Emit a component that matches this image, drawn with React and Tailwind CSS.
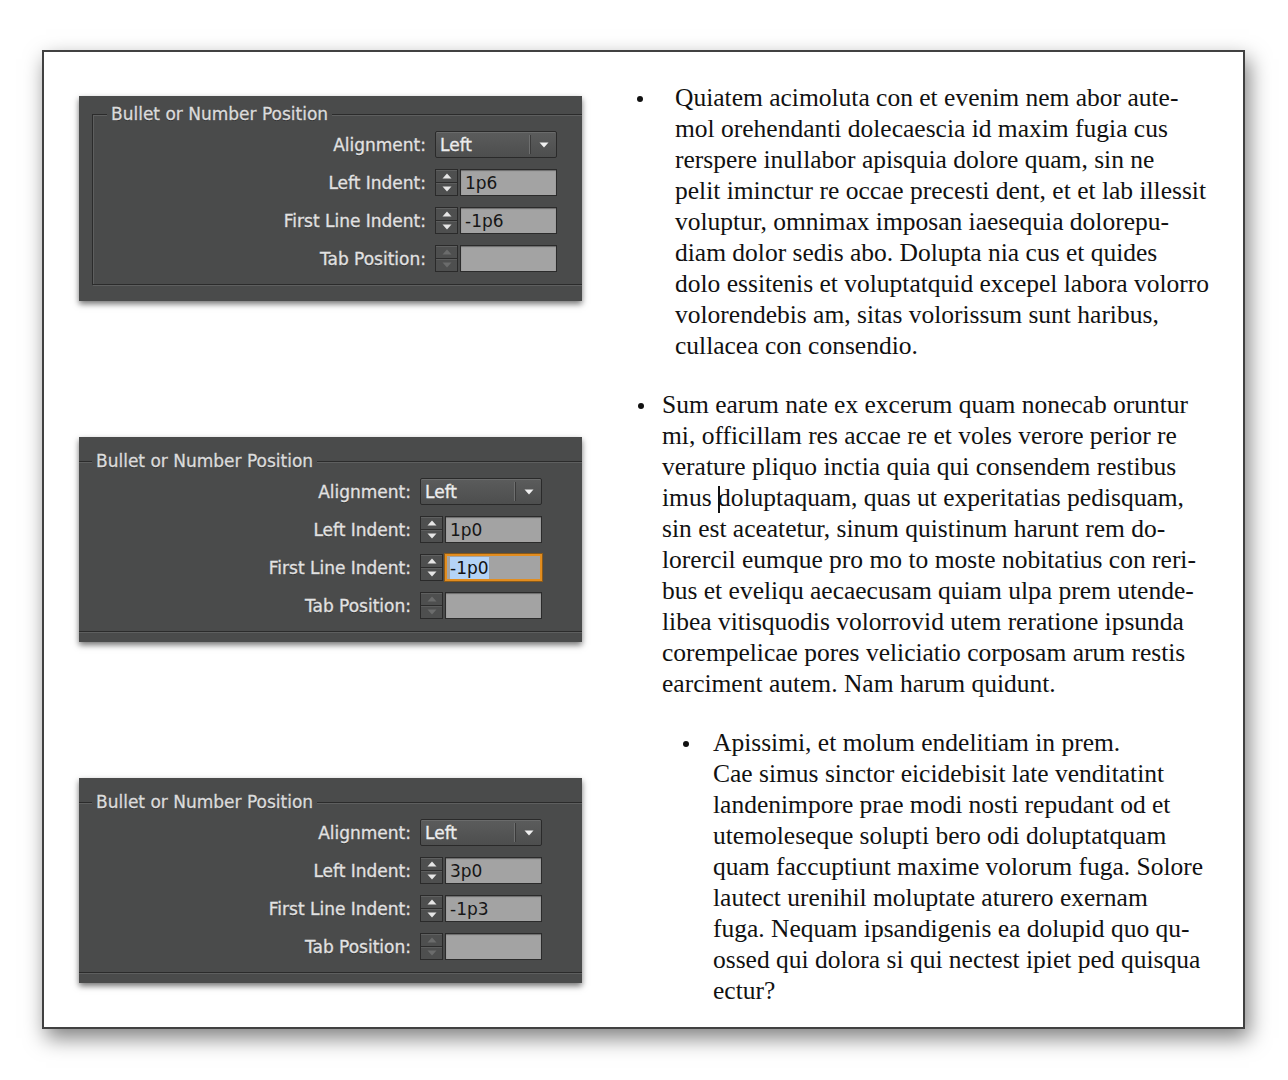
import React from 'react';

const UI_FONT = "font-['DejaVu_Sans',Lato,sans-serif]";

/* ── small triangles for the stepper and popup ─────────────────────────── */
const Tri = ({ down = false, dim = false, popup = false }) => (
  <svg width="10" height="6" viewBox="0 0 10 6">
    <path
      d={down || popup ? 'M0.5 0.5H9.5L5 5.5Z' : 'M0.5 5.5H9.5L5 0.5Z'}
      fill={dim ? '#6b6c6c' : popup ? '#f0f0f0' : '#e6e6e6'}
    />
  </svg>
);

const Stepper = ({ disabled }) => (
  <div className="w-[23px] h-[27px] flex flex-col border border-[#2a2a2a] bg-[#4e4f4f] shadow-[inset_0_1px_0_#5f6060]">
    <div className="flex-1 flex items-center justify-center">
      <Tri dim={disabled} />
    </div>
    <div className="h-px bg-[#2c2c2c]" />
    <div className="flex-1 flex items-center justify-center shadow-[inset_0_1px_0_#5c5d5d]">
      <Tri down dim={disabled} />
    </div>
  </div>
);

const Field = ({ value, focused }) => (
  <div
    className={
      focused
        ? 'w-[97px] h-[27px] flex items-center pl-[3px] bg-[#a3a3a3] border-2 border-[#e28d1f] shadow-[0_0_0_1px_#8a5a1a]'
        : 'w-[97px] h-[27px] flex items-center pl-[4px] bg-[#a3a3a3] border border-[#2b2b2b] shadow-[inset_0_1px_1px_rgba(0,0,0,0.35)]'
    }
  >
    {focused ? (
      <span className="bg-[#b4d3f6] text-[17px] leading-[22px] text-[#111]">{value}</span>
    ) : (
      <span className="text-[17px] leading-[22px] text-[#161616]">{value}</span>
    )}
  </div>
);

const Popup = () => (
  <div className="w-[122px] h-[27px] flex items-center border border-[#2a2a2a] rounded-[2px] bg-gradient-to-b from-[#5b5c5c] to-[#4d4e4e] shadow-[inset_0_1px_0_#6a6b6b]">
    <span className="flex-1 pl-[4px] text-[17px] leading-[22px] text-[#ededed] [-webkit-text-stroke:0.3px_#ededed]">
      Left
    </span>
    <div className="w-px h-[19px] bg-[#6e6f6f]" />
    <div className="w-px h-[19px] bg-[#3a3a3a]" />
    <div className="w-[25px] flex items-center justify-center">
      <Tri popup />
    </div>
  </div>
);

const Row = ({ label, children, first }) => (
  <div className={first ? 'flex items-center h-[27px]' : 'flex items-center h-[27px] mt-[11px]'}>
    <div className="w-[333px] text-right text-[17px] leading-[22px] text-[#e2e2e2] [-webkit-text-stroke:0.3px_#e2e2e2] [text-shadow:0_1px_0_rgba(0,0,0,0.35)]">
      {label}
    </div>
    <div className="ml-[9px] flex gap-[2px]">{children}</div>
  </div>
);

/* ── one "Bullet or Number Position" box ───────────────────────────────── */
const Panel = ({ boxClass, left, first, focusFirst }) => (
  <div className={`w-[503px] h-[205px] overflow-hidden bg-[#4a4b4b] shadow-[0_3px_6px_rgba(0,0,0,0.55)] ${UI_FONT}`}>
    <div
      className={`relative w-[560px] h-[171px] pt-[16px] border border-[#2b2b2b] shadow-[1px_1px_0_#5e5f5f,inset_1px_1px_0_#5e5f5f] ${boxClass}`}
    >
      <span className="absolute left-[14px] -top-[11px] px-[4px] bg-[#4a4b4b] text-[17px] leading-[20px] text-[#dcdcdc] [-webkit-text-stroke:0.3px_#dcdcdc] [text-shadow:0_1px_0_rgba(0,0,0,0.35)]">
        Bullet or Number Position
      </span>

      <Row label="Alignment:" first>
        <Popup />
      </Row>
      <Row label="Left Indent:">
        <Stepper />
        <Field value={left} />
      </Row>
      <Row label="First Line Indent:">
        <Stepper />
        <Field value={first} focused={focusFirst} />
      </Row>
      <Row label="Tab Position:">
        <Stepper disabled />
        <Field value="" />
      </Row>
    </div>
  </div>
);

/* ── body copy ─────────────────────────────────────────────────────────── */
const para1 = [
  'Quiatem acimoluta con et evenim nem abor aute-',
  'mol orehendanti dolecaescia id maxim fugia cus',
  'rerspere inullabor apisquia dolore quam, sin ne',
  'pelit iminctur re occae precesti dent, et et lab illessit',
  'voluptur, omnimax imposan iaesequia dolorepu-',
  'diam dolor sedis abo. Dolupta nia cus et quides',
  'dolo essitenis et voluptatquid excepel labora volorro',
  'volorendebis am, sitas volorissum sunt haribus,',
  'cullacea con consendio.',
];

const para2 = [
  'Sum earum nate ex excerum quam nonecab oruntur',
  'mi, officillam res accae re et voles verore perior re',
  'verature pliquo inctia quia qui consendem restibus',
  null,
  'sin est aceatetur, sinum quistinum harunt rem do-',
  'lorercil eumque pro mo to moste nobitatius con reri-',
  'bus et eveliqu aecaecusam quiam ulpa prem utende-',
  'libea vitisquodis volorrovid utem reratione ipsunda',
  'corempelicae pores veliciatio corposam arum restis',
  'earciment autem. Nam harum quidunt.',
];

const para3 = [
  'Apissimi, et molum endelitiam in prem.',
  'Cae simus sinctor eicidebisit late venditatint',
  'landenimpore prae modi nosti repudant od et',
  'utemoleseque solupti bero odi doluptatquam',
  'quam faccuptiunt maxime volorum fuga. Solore',
  'lautect urenihil moluptate aturero exernam',
  'fuga. Nequam ipsandigenis ea dolupid quo qu-',
  'ossed qui dolora si qui nectest ipiet ped quisqua',
  'ectur?',
];

const Item = ({ lines, gutter, dot, className = '' }) => (
  <div className={`flex ${className}`}>
    <div className={`h-[33px] flex items-center shrink-0 ${gutter}`}>
      <span className={`size-[6px] rounded-full bg-[#111] ${dot}`} />
    </div>
    <div>
      {lines.map((line, i) =>
        line === null ? (
          <div key={i} className="whitespace-nowrap">
            imus{' '}
            <span className="inline-block w-[2px] h-[27px] -mr-[2px] bg-[#111] align-[-7px]" />
            doluptaquam, quas ut experitatias pedisquam,
          </div>
        ) : (
          <div key={i} className="whitespace-nowrap">
            {line}
          </div>
        )
      )}
    </div>
  </div>
);

export default function App() {
  return (
    <div className="w-[1288px] h-[1080px] bg-white pt-[50px] pl-[42px]">
      <div className="w-[1203px] h-[979px] flex border-2 border-[#414141] bg-white shadow-[4px_9px_20px_rgba(0,0,0,0.5)]">
        <div className="pl-[35px] pt-[44px] flex flex-col gap-[136px]">
          <Panel boxClass="ml-[13px] mt-[18px]" left="1p6" first="-1p6" />
          <Panel boxClass="-ml-[2px] mt-[24px]" left="1p0" first="-1p0" focusFirst />
          <Panel boxClass="-ml-[2px] mt-[24px]" left="3p0" first="-1p3" />
        </div>

        <div className="ml-[43px] pt-[30px] font-['Liberation_Serif','Times_New_Roman',serif] text-[25.5px] leading-[31px] text-[#111]">
          <Item lines={para1} gutter="w-[50px]" dot="ml-[12px]" />
          <Item lines={para2} gutter="w-[37px]" dot="ml-[13px]" className="mt-[28px]" />
          <Item lines={para3} gutter="w-[88px]" dot="ml-[58px]" className="mt-[28px]" />
        </div>
      </div>
    </div>
  );
}
